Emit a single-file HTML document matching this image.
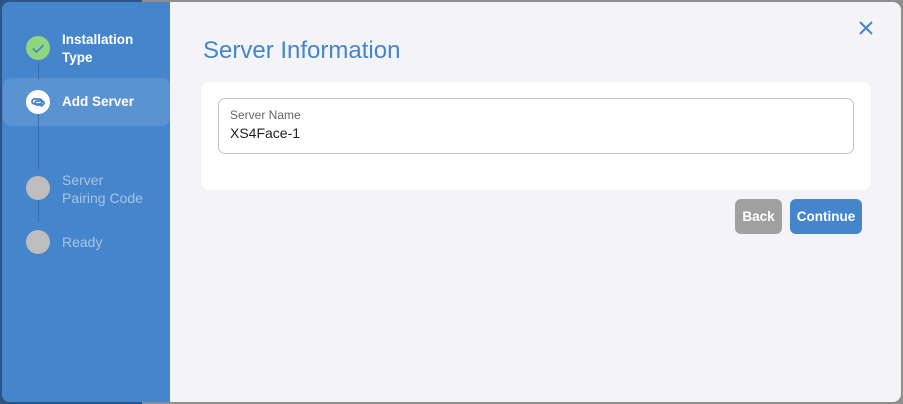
<!DOCTYPE html>
<html><head><style>
*{margin:0;padding:0;box-sizing:border-box}
body{width:903px;height:404px;overflow:hidden;position:relative;font-family:"Liberation Sans",Roboto,sans-serif;background:linear-gradient(90deg,#2c5585 0,#2c5585 142px,#8e8e8e 142px)}
.dlg{position:absolute;left:2px;top:2px;width:899px;height:400px;border-radius:8px;background:#f3f3f8;overflow:hidden}
.side{position:absolute;left:0;top:0;width:168px;height:400px;background:#4485cb}
.hl{position:absolute;left:1px;top:76px;width:167px;height:48px;background:rgba(255,255,255,.12);border-radius:8px}
.circ{position:absolute;left:24px;width:24px;height:24px;border-radius:50%}
.lbl{position:absolute;left:60px;font-size:13.5px;line-height:18px;font-weight:bold;color:#fff}
.dim{color:#a9c4e2;font-weight:normal;font-size:14px}
.line{position:absolute;left:36px;width:1px;background:#3a6fab}
h1{position:absolute;left:201px;top:35px;font-size:24px;font-weight:normal;color:#4485cb}
.card{position:absolute;left:200px;top:80px;width:668px;height:108px;background:#fff;border-radius:7px}
.inp{position:absolute;left:16px;top:16px;width:636px;height:56px;border:1px solid #c4c4c4;border-radius:7px}
.btn{position:absolute;top:197px;height:35px;border-radius:6px;color:#fff;font-size:13.5px;font-weight:bold;text-align:center;line-height:35px}
</style></head><body>
<div class="dlg">
 <div class="side">
  <div class="hl"></div>
  <div class="line" style="top:60px;height:18px"></div>
  <div class="line" style="top:112px;height:56px"></div>
  <div class="line" style="top:196px;height:24px"></div>
  <div class="circ" style="top:34px;background:#8fd681"><svg width="24" height="24"><path d="M7 12.5l3.5 3.5 7-7" stroke="#4a84c6" stroke-width="1.8" fill="none"/></svg></div>
  <div class="lbl" style="top:29px">Installation<br>Type</div>
  <div class="circ" style="top:88px;background:#fff"><svg width="24" height="24"><rect x="6" y="9" width="10" height="5" rx="2.5" stroke="#4485cb" stroke-width="1.8" fill="none"/><rect x="9" y="11" width="9" height="4" rx="2" stroke="#4485cb" stroke-width="1.8" fill="none"/><path d="M15.5 13v4M13.5 15h4" stroke="#4485cb" stroke-width="1.5"/></svg></div>
  <div class="lbl" style="top:91px">Add Server</div>
  <div class="circ" style="top:174px;background:#bdbdbd"></div>
  <div class="lbl dim" style="top:169px">Server<br>Pairing Code</div>
  <div class="circ" style="top:228px;background:#bdbdbd"></div>
  <div class="lbl dim" style="top:231px">Ready</div>
 </div>
 <svg style="position:absolute;left:856px;top:18px" width="16" height="16"><path d="M2 2l12 12M14 2L2 14" stroke="#4485cb" stroke-width="2"/></svg>
 <h1>Server Information</h1>
 <div class="card"><div class="inp">
  <div style="position:absolute;left:11px;top:9px;font-size:12px;color:#666">Server Name</div>
  <div style="position:absolute;left:11px;top:26px;font-size:14px;color:#222">XS4Face-1</div>
 </div></div>
 <div class="btn" style="left:733px;width:47px;background:#a0a0a0">Back</div>
 <div class="btn" style="left:788px;width:72px;background:#4485cb">Continue</div>
</div>
</body></html>
